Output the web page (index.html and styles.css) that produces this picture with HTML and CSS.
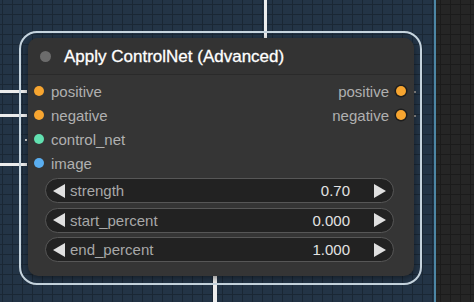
FILE: index.html
```html
<!DOCTYPE html>
<html>
<head>
<meta charset="utf-8">
<link rel="stylesheet" href="styles.css">
</head>
<body>
<div class="canvas">
  <div class="grid-left"></div>
  <div class="divider"></div>
  <div class="grid-right"></div>

  <div class="wire wire-top"></div>
  <div class="wire wire-bottom"></div>
  <div class="wire wire-in wire-pos"></div>
  <div class="wire wire-in wire-neg"></div>
  <div class="wire wire-in wire-img"></div>
  <div class="stub stub-cn"></div>
  <div class="stub stub-out1"></div>
  <div class="stub stub-out2"></div>

  <div class="outline"></div>

  <div class="node">
    <div class="title">
      <span class="title-dot"></span>
      <span class="title-text">Apply ControlNet (Advanced)</span>
    </div>
    <div class="slots">
      <div class="row">
        <div class="slot in"><span class="dot orange"></span><span class="label">positive</span></div>
        <div class="slot out"><span class="label">positive</span><span class="dot orange ring"></span></div>
      </div>
      <div class="row">
        <div class="slot in"><span class="dot orange"></span><span class="label">negative</span></div>
        <div class="slot out"><span class="label">negative</span><span class="dot orange ring"></span></div>
      </div>
      <div class="row">
        <div class="slot in"><span class="dot green"></span><span class="label">control_net</span></div>
      </div>
      <div class="row">
        <div class="slot in"><span class="dot blue"></span><span class="label">image</span></div>
      </div>
    </div>
    <div class="widgets">
      <div class="widget">
        <svg class="arrow" width="12" height="14" viewBox="0 0 12 14"><polygon points="12,0 12,14 0,7"/></svg>
        <span class="w-label">strength</span>
        <span class="w-value">0.70</span>
        <svg class="arrow" width="12" height="14" viewBox="0 0 12 14"><polygon points="0,0 0,14 12,7"/></svg>
      </div>
      <div class="widget">
        <svg class="arrow" width="12" height="14" viewBox="0 0 12 14"><polygon points="12,0 12,14 0,7"/></svg>
        <span class="w-label">start_percent</span>
        <span class="w-value">0.000</span>
        <svg class="arrow" width="12" height="14" viewBox="0 0 12 14"><polygon points="0,0 0,14 12,7"/></svg>
      </div>
      <div class="widget">
        <svg class="arrow" width="12" height="14" viewBox="0 0 12 14"><polygon points="12,0 12,14 0,7"/></svg>
        <span class="w-label">end_percent</span>
        <span class="w-value">1.000</span>
        <svg class="arrow" width="12" height="14" viewBox="0 0 12 14"><polygon points="0,0 0,14 12,7"/></svg>
      </div>
    </div>
  </div>
</div>
</body>
</html>
```

FILE: styles.css
```css
* { box-sizing: border-box; }
html, body { margin: 0; padding: 0; }
body {
  width: 474px;
  height: 302px;
  overflow: hidden;
  font-family: "Liberation Sans", Arial, sans-serif;
  background: #222;
}
.canvas {
  position: relative;
  width: 474px;
  height: 302px;
  display: flex;
}
.grid-left {
  width: 434px;
  height: 100%;
  background-color: #233446;
  background-image:
    linear-gradient(to right, #1a2734 1px, transparent 1px),
    linear-gradient(to bottom, #1a2734 1px, transparent 1px);
  background-size: 10px 10px;
  background-position: 2px 4px;
}
.divider {
  width: 2px;
  height: 100%;
  background: #4d87a6;
}
.grid-right {
  flex: 1;
  height: 100%;
  background-color: #252525;
  background-image:
    linear-gradient(to right, #1b1b1b 1px, transparent 1px),
    linear-gradient(to bottom, #1b1b1b 1px, transparent 1px);
  background-size: 10px 10px;
  background-position: 4px 4px;
}
.wire {
  position: absolute;
  background: #ececec;
}
.wire-top { left: 264px; top: 0; width: 3px; height: 38px; }
.wire-bottom { left: 213px; top: 276px; width: 4px; height: 26px; }
.wire-in { left: 0; width: 27px; height: 3px; }
.wire-pos { top: 90px; }
.wire-neg { top: 114px; }
.wire-img { top: 163px; }
.stub {
  position: absolute;
  width: 2px;
  height: 2px;
  background: #cfcfcf;
}
.stub-cn { left: 25px; top: 139px; }
.stub-out1 { left: 414px; top: 91px; background: #888; }
.stub-out2 { left: 414px; top: 115px; background: #888; }
.outline {
  position: absolute;
  left: 19px;
  top: 31px;
  width: 403px;
  height: 254px;
  border: 2px solid #c6d4de;
  border-radius: 18px;
}
.node {
  position: absolute;
  left: 28px;
  top: 38px;
  width: 386px;
  height: 238px;
  background: #353535;
  border-radius: 10px;
  box-shadow: 0 2px 6px rgba(0,0,0,0.45);
  display: flex;
  flex-direction: column;
}
.title {
  height: 37px;
  border-bottom: 1px solid #2a2a2a;
  display: flex;
  align-items: center;
  padding-left: 12px;
  padding-top: 1px;
  background: #333;
  border-radius: 10px 10px 0 0;
}
.title-dot {
  width: 11px;
  height: 11px;
  border-radius: 50%;
  background: #6c6c6c;
}
.title-text {
  margin-left: 13px;
  color: #ffffff;
  font-size: 17px;
  font-weight: normal;
  -webkit-text-stroke: 0.3px #ffffff;
}
.slots {
  padding-top: 4px;
  display: flex;
  flex-direction: column;
}
.row {
  height: 24px;
  display: flex;
  align-items: center;
  justify-content: space-between;
}
.slot {
  display: flex;
  align-items: center;
}
.slot.in { padding-left: 6px; }
.slot.out { padding-right: 8px; margin-left: auto; }
.dot {
  width: 10px;
  height: 10px;
  border-radius: 50%;
  display: inline-block;
}
.dot.ring { box-shadow: 0 0 0 1.5px #1e1e1e; }
.orange { background: #f7a530; }
.green { background: #62e0b0; }
.blue { background: #5aaef0; }
.label {
  color: #b0b0b0;
  font-size: 15px;
}
.slot.in .label { margin-left: 7px; }
.slot.out .label { margin-right: 7px; }
.widgets {
  margin-top: 3px;
  padding: 0 20px 0 17px;
  display: flex;
  flex-direction: column;
  gap: 4.5px;
}
.widget {
  height: 25px;
  border: 1px solid #575757;
  border-radius: 13px;
  background: #222;
  display: flex;
  align-items: center;
  padding: 0 7px 0 7px;
  font-size: 15px;
}
.arrow { fill: #e0e0e0; flex: none; }
.w-label {
  color: #a8a8a8;
  margin-left: 5px;
}
.w-value {
  color: #e2e2e2;
  margin-left: auto;
  margin-right: 24px;
}
```
